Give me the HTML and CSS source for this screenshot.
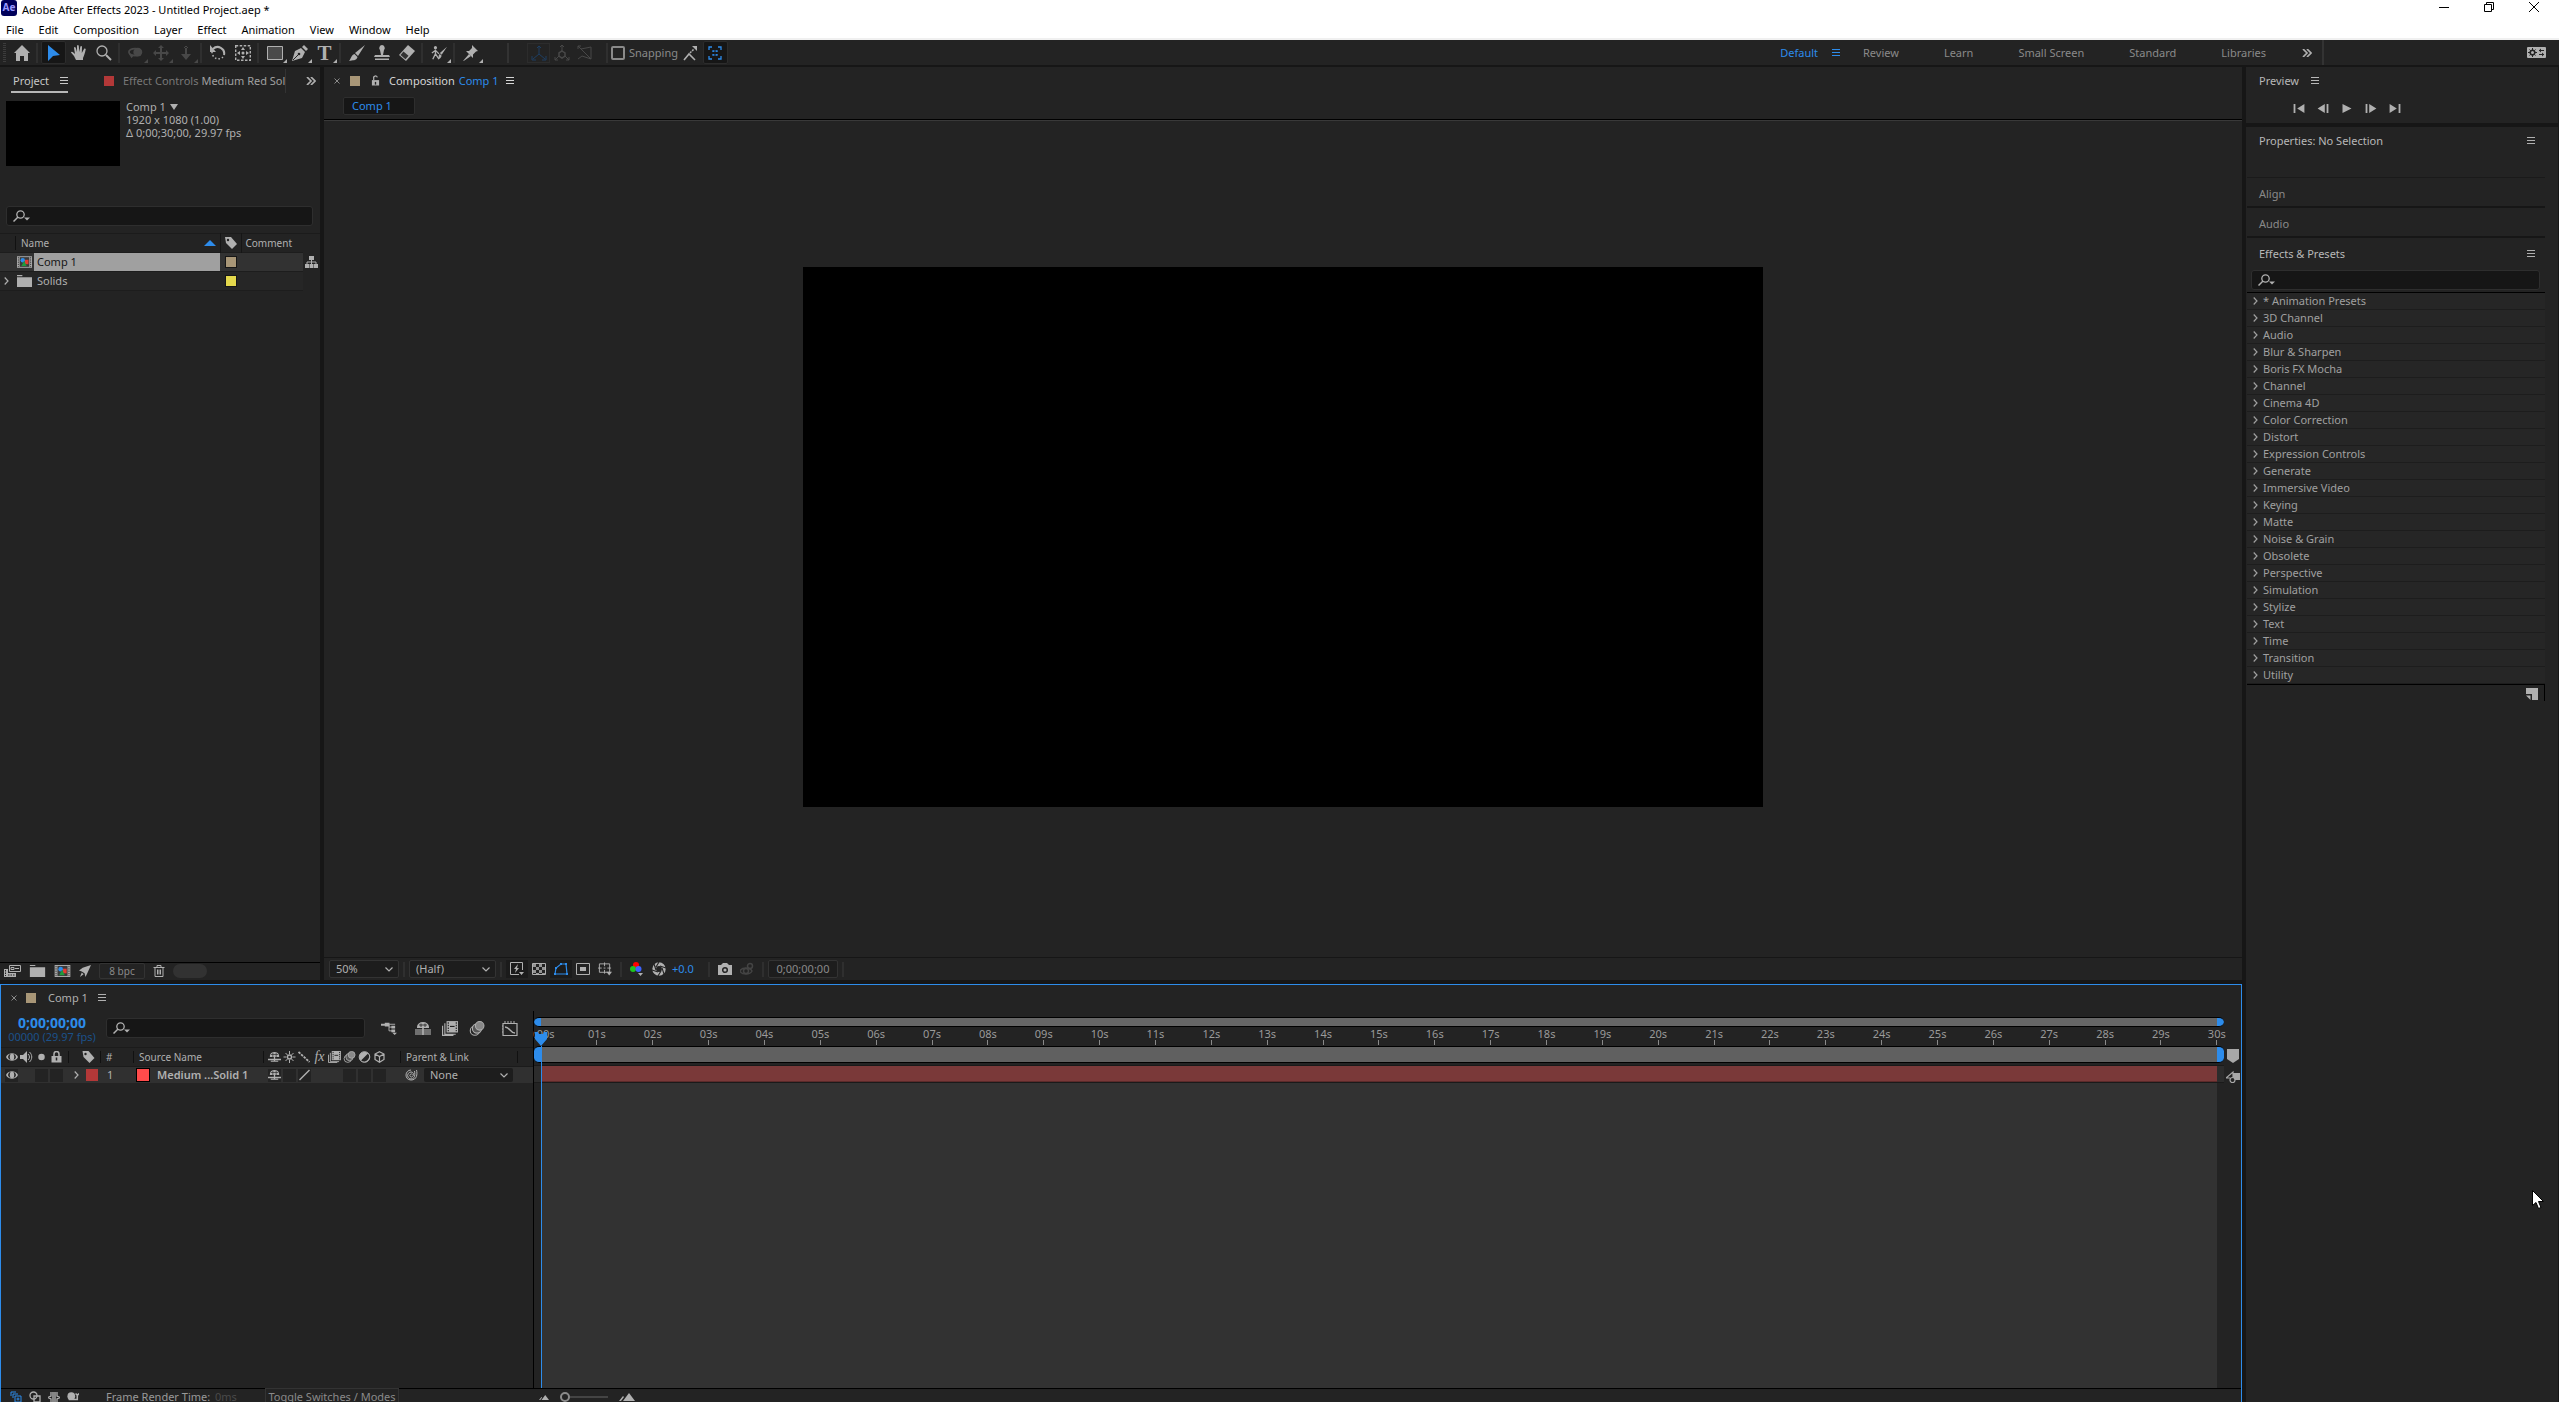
FILE: index.html
```html
<!DOCTYPE html>
<html lang="en">
<head>
    <meta charset="UTF-8">
    <meta name="viewport" content="width=device-width, initial-scale=1.0">
    <title>Adobe After Effects 2023 - Untitled Project.aep *</title>
    <link rel="stylesheet" href="styles.css">
</head>
<body>
    <!-- Icon sprite -->
    <svg class="sprite" aria-hidden="true">
        <symbol id="home" viewBox="0 0 16 16"><path d="M8 0L0 8h2v8h4v-5h4v5h4V8h2z"/></symbol>
        <symbol id="arrow" viewBox="0 0 16 16"><path d="M2 0v16l5-5 7-1z"/></symbol>
        <symbol id="hand" viewBox="0 0 16 16"><path d="M5 15L3 11 0 7.500c0-1 1.500-1 2-.3L4 9 3 3c0-1.300 1.500-1.300 1.800 0L6 7V1c0-1.300 1.700-1.300 1.800 0L8.300 7l1-5.300c.3-1.200 1.800-1 1.700.3L10.800 8l2.200-4c.7-1 2-.4 1.700.6C14 8 13 11 12 13v2z"/></symbol>
        <symbol id="loupe" viewBox="0 0 16 16"><path d="M10 10l5 5" stroke="currentColor" stroke-width="2"/><circle cx="6" cy="6" r="5" fill="none" stroke="currentColor" stroke-width="1.300"/></symbol>
        <symbol id="orbit" viewBox="0 0 18 16"><ellipse cx="8" cy="7" rx="7" ry="4" fill="none" stroke="currentColor" stroke-width="2"/><circle cx="11" cy="7" r="5"/><path d="M1 9l6 1-3 4z"/></symbol>
        <symbol id="move" viewBox="0 0 16 16"><path d="M7 3h2v4h4V5l3 3-3 3V9H9v4h2l-3 3-3-3h2V9H3v2L0 8l3-3v2h4V3H5l3-3 3 3z"/></symbol>
        <symbol id="dolly" viewBox="0 0 16 16"><path d="M7 1h2v8h4l-5 6-5-6h4zM6 3h4V2H6z"/></symbol>
        <symbol id="rotate" viewBox="0 0 16 16"><path d="M3 4a6.500 6.500 0 0 1 11 6" fill="none" stroke="currentColor" stroke-width="2"/><path d="M13 12a6.500 6.500 0 0 1-11-5" fill="none" stroke="currentColor" stroke-width="1.500" stroke-dasharray="1.500 2"/><path d="M0 0v7h6z"/></symbol>
        <symbol id="anchor" viewBox="0 0 16 16"><path d="M.7.700h14.600v14.600H.700z" fill="none" stroke="currentColor" stroke-width="1.400" stroke-dasharray="2.500 1.500"/><path d="M8 2l2 3H6zM8 14l2-3H6zM2 8l3-2v4zM14 8l-3-2v4z"/><circle cx="8" cy="8" r="1.500"/></symbol>
        <symbol id="rect" viewBox="0 0 16 16"><path d="M.5 1.500h15v13H.5z" fill="#4a4a4a" stroke="currentColor"/></symbol>
        <symbol id="pen" viewBox="0 0 16 16"><path d="M0 16l3-10 6-3 4 4-3 6zM10 2l2-2 4 4-2 2z"/><path d="M1 15l5-5" stroke="#232323"/><circle cx="7" cy="9" r="1.300" fill="#232323"/></symbol>
        <symbol id="brush" viewBox="0 0 16 16"><path d="M16 0l-7 11-3-3zM5.500 9l3 3c-1 4-5 3-8.500 4 2-2 2-6 5.500-7z"/></symbol>
        <symbol id="stamp" viewBox="0 0 16 16"><path d="M8 0a3 3 0 0 1 2 5L9 10h6l1 2H0l1-2h6L6 5a3 3 0 0 1 2-5zM1 13.500h14V15H1z"/></symbol>
        <symbol id="eraser" viewBox="0 0 16 16"><path d="M9 0l7 6-9 10-7-6z"/><path d="M1.500 10l3-3.500 5 4.300-3 3.400z" fill="#333"/></symbol>
        <symbol id="roto" viewBox="0 0 18 16"><circle cx="5" cy="2" r="1.800"/><path d="M5 4v5l-3 6M5 9l4 6M1 8l4-3 4 4" fill="none" stroke="currentColor" stroke-width="1.500"/><path d="M18 1l-6 9-2-2zM10 9l2 2c-1 3-2 3-4 4 1-3 0-5 2-6z"/></symbol>
        <symbol id="pin" viewBox="0 0 16 16"><path d="M9 0l6 6-2 .5-3 3V13L3 6h3l3-3z"/><path d="M6 9l-6 7 1-.2L8 11z"/></symbol>
        <symbol id="axes" viewBox="0 0 16 16"><path d="M8 1v8l-6 5M8 9l6 5M6 3l2-2 2 2M1 11v4h4M15 11v4h-4" fill="none" stroke="currentColor"/></symbol>
        <symbol id="axes-world" viewBox="0 0 16 16"><path d="M8 0v6M6 2l2-2 2 2M5 11l-4 4M11 11l4 4M1 12v3h3M15 12v3h-3" fill="none" stroke="currentColor"/><path d="M8 6l3 2v3l-3 2-3-2V8z" fill="none" stroke="currentColor" stroke-width="1.500"/></symbol>
        <symbol id="axes-view" viewBox="0 0 16 16"><path d="M4 4l10-2v12l-9-3M1 1l13 13M1 4V1h3M5 11l-4 3" fill="none" stroke="currentColor"/></symbol>
        <symbol id="snap" viewBox="0 0 16 16"><path d="M2 15l5-6 6 6" fill="none" stroke="currentColor" stroke-width="1.600"/><path d="M10 1h5v5z"/><path d="M8 8l4-4" stroke="currentColor" stroke-width="1.500" stroke-dasharray="2 1"/></symbol>
        <symbol id="focus" viewBox="0 0 16 16"><path d="M2 5V2h3M11 2h3v3M14 11v3h-3M5 14H2v-3M6 7V6h1.500M8.500 6H10v1M10 9v1H8.500M7.500 10H6V9" fill="none" stroke="currentColor" stroke-width="1.300"/></symbol>
        <symbol id="more" viewBox="0 0 10 8"><path d="M1 0l4 4-4 4M5 0l4 4-4 4" fill="none" stroke="currentColor" stroke-width="1.700"/></symbol>
        <symbol id="menu" viewBox="0 0 8 8"><path d="M0 .5h8M0 3.500h8M0 6.500h8" stroke="currentColor"/></symbol>
        <symbol id="sync" viewBox="0 0 19 11"><rect width="19" height="11" rx="1"/><circle cx="5.500" cy="5.500" r="2.300" fill="none" stroke="#232323" stroke-width="1.600"/><path d="M5.500 1v2M5.500 8v2M1 5.500h2M8 5.500h2M2.500 2.500l1 1M8.500 2.500l-1 1M2.500 8.500l1-1M8.500 8.500l-1-1M12 3.500h5M12 7.500h5" stroke="#232323" fill="none"/><path d="M12 3.500l2-2v4zM17 7.500l-2-2v4z" fill="#232323"/></symbol>
        <symbol id="close" viewBox="0 0 6 6"><path d="M.5.500l5 5M5.500.500l-5 5" stroke="currentColor"/></symbol>
        <symbol id="unlock" viewBox="0 0 10 12"><path d="M1 5h8v6H1z"/><path d="M3 5V3a2 2 0 0 1 4-1" fill="none" stroke="currentColor" stroke-width="1.400"/><path d="M5 7v3" stroke="#232323" stroke-width="1.500"/></symbol>
        <symbol id="lock" viewBox="0 0 10 12"><path d="M0 5h10v6.500H0z"/><path d="M2.500 5V3a2.500 2.500 0 0 1 5 0v2" fill="none" stroke="currentColor" stroke-width="1.500"/><path d="M5 6.500v3" stroke="#232323" stroke-width="1.500"/></symbol>
        <symbol id="find" viewBox="0 0 17 12"><circle cx="7.500" cy="4.500" r="3.700" fill="none" stroke="currentColor" stroke-width="1.300"/><path d="M5 7l-4.500 4.500" stroke="currentColor" stroke-width="1.500"/><path d="M11 7.500h6l-3 3z"/></symbol>
        <symbol id="up" viewBox="0 0 12 6"><path d="M6 0l6 6H0z"/></symbol>
        <symbol id="down" viewBox="0 0 8 6"><path d="M0 0h8L4 6z"/></symbol>
        <symbol id="tag" viewBox="0 0 12 12"><path d="M0 0h6l6 7-5 5-6-6z"/><circle cx="3" cy="3" r="1.200" fill="#232323"/></symbol>
        <symbol id="comp" viewBox="0 0 17 13"><path d="M0 0h17v13H0z"/><path d="M1.500 1v11M15.500 1v11" stroke="#232323" stroke-dasharray="1.500 1"/><path d="M3 1h11v11H3z" fill="#3a3a3a"/><circle cx="6.500" cy="4.500" r="2.500" fill="#2d8ceb"/><path d="M9 4h4v5H9z" fill="#e33b32"/><path d="M8 5l3 6H5z" fill="#1f9a3d"/></symbol>
        <symbol id="folder" viewBox="0 0 14 11"><path d="M0 0h5v1H0zM0 2h14v9H0z"/></symbol>
        <symbol id="chevron" viewBox="0 0 5 8"><path d="M.7.500L4 4 .7 7.500" fill="none" stroke="currentColor" stroke-width="1.200"/></symbol>
        <symbol id="caret" viewBox="0 0 8 5"><path d="M.5.500L4 4 7.500.500" fill="none" stroke="currentColor" stroke-width="1.200"/></symbol>
        <symbol id="tree" viewBox="0 0 13 12"><path d="M4 0h5v4H4zM0 8h4v4H0zM4.500 8h4v4h-4zM9 8h4v4H9z"/><path d="M6.500 4v4M2 8V6h9v2" fill="none" stroke="currentColor"/></symbol>
        <symbol id="footage" viewBox="0 0 17 12"><path d="M5.500.500h11v6h-11zM7 2.500h3v2H7zM11 3.500h4" fill="none" stroke="currentColor"/><path d="M0 4h4v4h8v4H0z"/><path d="M1.500 5v6M4 10h7" stroke="#232323" stroke-dasharray="1.500 1"/></symbol>
        <symbol id="rocket" viewBox="0 0 13 13"><path d="M13 0L9 9l-2 4-1-4-3-2L0 6l4-3zM3 8l2 2-4 3z"/></symbol>
        <symbol id="trash" viewBox="0 0 11 12"><path d="M0 2.500h11M3.500 2V.500h4V2M1.500 3v8.500h8V3M4 4.500v5M5.500 4.500v5M7 4.500v5" fill="none" stroke="currentColor"/></symbol>
        <symbol id="fast" viewBox="0 0 14 14"><path d="M9 12.500H.500v-12h12V8" fill="none" stroke="currentColor"/><path d="M8 2L4 7h2l-1 4 4-5H7zM9 10h5l-2.500 3z"/></symbol>
        <symbol id="checker" viewBox="0 0 14 12"><path d="M.5.500h13v11H.500z" fill="none" stroke="currentColor"/><path d="M1 1h3v3H1zM7 1h3v3H7zM4 4h3v3H4zM10 4h3v3h-3zM1 7h3v3H1zM7 7h3v3H7zM4 10h3v1H4zM10 10h3v1h-3z" opacity=".8"/></symbol>
        <symbol id="mask" viewBox="0 0 14 12"><path d="M1 11l1-6 5-4h5l1 10z" fill="none" stroke="currentColor" stroke-width="1.200"/><path d="M0 10h2v2H0zM1 4h2v2H1zM6 0h2v2H6zM11 0h2v2h-2zM12 10h2v2h-2z"/></symbol>
        <symbol id="roi" viewBox="0 0 14 12"><path d="M.5.500h13v11H.500z" fill="none" stroke="currentColor"/><path d="M4 4h6v4H4z"/></symbol>
        <symbol id="guides" viewBox="0 0 15 14"><path d="M1.500 1.500h11v9h-11z" fill="none" stroke="currentColor"/><path d="M7 0v4M7 8v4M0 6h4M10 6h4M6 6h2" stroke="currentColor"/><path d="M9 10h6l-3 4z"/></symbol>
        <symbol id="channels" viewBox="0 0 14 14"><circle cx="6" cy="3" r="3" fill="#f00"/><circle cx="3" cy="7" r="3" fill="#1ec41e"/><circle cx="8.500" cy="7" r="3" fill="#3d64ff"/><path d="M8 11h5l-2.500 3z"/></symbol>
        <symbol id="aperture" viewBox="0 0 14 14"><circle cx="7" cy="7" r="4.800" fill="none" stroke="currentColor" stroke-width="3.800"/><path d="M7 0L4 5M14 6L8 4M12 12l-2-6M6 14l3-5M0 8l6 2M2 2l2 6" stroke="#232323" stroke-width="1.100"/></symbol>
        <symbol id="camera" viewBox="0 0 14 12"><path d="M0 2h3l2-2h4l2 2h3v10H0z"/><circle cx="7" cy="7" r="2.300" fill="none" stroke="#232323" stroke-width="1.500"/></symbol>
        <symbol id="show" viewBox="0 0 14 12"><circle cx="6" cy="8" r="2.500" fill="none" stroke="currentColor" stroke-width="1.500"/><path d="M0 8c2-4 10-4 12 0-2 4-10 4-12 0" fill="none" stroke="currentColor" stroke-width="1.500"/><circle cx="10" cy="3" r="2.500" fill="none" stroke="currentColor" stroke-width="1.500"/></symbol>
        <symbol id="flow" viewBox="0 0 17 14"><path d="M0 2h4v2H0zM4 1h5v4H4zM11 4h4v3h-4zM11 8h4v3h-4zM12 11.500h5L14.500 14z"/><path d="M8 2.500h7M8.500 3v6.500H12M8.500 5.500H12" fill="none" stroke="currentColor"/></symbol>
        <symbol id="shy" viewBox="0 0 14 12"><path d="M2 5a5 4.500 0 0 1 10 0v1H2zM0 8h14v1.500H0zM6.300 5h1.400v5H6.300zM3 10h8v1H3z"/><path d="M5.200 1.500V6M8.800 1.500V6M3 3.300h8" stroke="#232323" stroke-width=".7"/></symbol>
        <symbol id="shy-big" viewBox="0 0 16 13"><path d="M0 7h16v6H0z" opacity=".55"/><path d="M2 5a6 5 0 0 1 12 0v1H2zM7.200 5h1.600v8H7.200z"/><path d="M6 1.500V5M10 1.500V5M4 3h8" stroke="#232323" stroke-width=".8"/></symbol>
        <symbol id="film" viewBox="0 0 14 13"><path d="M4 0h10v10H4z"/><path d="M2.500 2v9.500H12M.5 4v8.500H10" fill="none" stroke="currentColor"/><path d="M5.500 1v8M12.500 1v8" stroke="#232323" stroke-dasharray="1.300 1"/><path d="M7 4.700h4" stroke="#232323"/></symbol>
        <symbol id="blur" viewBox="0 0 14 14"><circle cx="5" cy="9" r="4.300" fill="none" stroke="currentColor"/><circle cx="7" cy="7" r="4.300" fill="#555" stroke="currentColor"/><circle cx="9.500" cy="4.500" r="4" fill="#888" stroke="currentColor"/></symbol>
        <symbol id="graph" viewBox="0 0 16 15"><path d="M1 2.500h14v12H1z" fill="none" stroke="currentColor" stroke-width="1.200"/><path d="M3 0v2M6 0v2M9 0v2M12 0v2M0 5h1M0 8h1M0 11h1" stroke="currentColor"/><path d="M3 6c5 0 5 6 10 6" fill="none" stroke="currentColor" stroke-width="1.300"/></symbol>
        <symbol id="eye" viewBox="0 0 12 8"><path d="M0 4c2-5 10-5 12 0-2 5-10 5-12 0z"/><path d="M2 4c1-3 2-3 2.500-3C3.500 3 3.500 5 4.500 7 3.500 6.500 2.500 6 2 4zM10 4C9 1 8 1 7.500 1c1 2 1 4 0 6 1-.5 2-1 2.500-3z" fill="#232323"/></symbol>
        <symbol id="speaker" viewBox="0 0 13 12"><path d="M0 4h3l4-4v12L3 8H0z"/><path d="M8 3c2 2 2 4 0 6M9.500 1c3 3 3 7 0 10" fill="none" stroke="currentColor"/></symbol>
        <symbol id="dot" viewBox="0 0 8 8"><circle cx="4" cy="4" r="3.700"/></symbol>
        <symbol id="sun" viewBox="0 0 12 12"><circle cx="6" cy="6" r="2" fill="none" stroke="currentColor" stroke-width="1.400"/><path d="M6 0v3M6 9v3M0 6h3M9 6h3M2 2l2 2M8 8l2 2M10 2L8 4M4 8l-2 2" stroke="currentColor"/></symbol>
        <symbol id="quality" viewBox="0 0 12 12"><path d="M0 1l11 10" stroke="currentColor" stroke-width="1.800" stroke-dasharray="2.500 1"/></symbol>
        <symbol id="slash" viewBox="0 0 12 12"><path d="M1 11L11 1" stroke="currentColor" stroke-width="1.400"/></symbol>
        <symbol id="adjust" viewBox="0 0 12 12"><circle cx="6" cy="6" r="5.300"/><path d="M9.500 2.500a5 5 0 0 1-7 7z" fill="#232323"/><circle cx="6" cy="6" r="5.300" fill="none" stroke="currentColor"/></symbol>
        <symbol id="cube" viewBox="0 0 12 12"><path d="M6 .7l4.500 2.300v5.500L6 11.300 1.500 8.500V3zM1.500 3L6 5.500 10.500 3M6 5.500V11" fill="none" stroke="currentColor" stroke-width="1.200"/></symbol>
        <symbol id="spiral" viewBox="0 0 13 12"><path d="M7.500 5.500a1.500 1.500 0 1 0 0 2c1.500-1 1.500-4.500-1.500-4.500a3.500 3.500 0 1 0 3 5.500c1-1.500 1-4 .5-6.500M11.500 1c1 4 .5 10-5.500 10-3.500 0-5-2.500-5-5s2-5 5-5" fill="none" stroke="currentColor"/></symbol>
        <symbol id="first" viewBox="0 0 12 10"><path d="M0 0h2v10H0zM12 0v10L4 5z"/></symbol>
        <symbol id="prev" viewBox="0 0 12 10"><path d="M10 0h2v10h-2zM8 0v10L0 5z"/></symbol>
        <symbol id="play" viewBox="0 0 10 10"><path d="M0 0l10 5-10 5z"/></symbol>
        <symbol id="next" viewBox="0 0 12 10"><path d="M0 0h2v10H0zM4 0l8 5-8 5z"/></symbol>
        <symbol id="last" viewBox="0 0 12 10"><path d="M10 0h2v10h-2zM0 0l8 5-8 5z"/></symbol>
        <symbol id="newbin" viewBox="0 0 12 12"><path d="M0 0h12v12H6V6H0z"/><path d="M0 7.500h4.500V12z"/></symbol>
        <symbol id="marker" viewBox="0 0 12 14"><path d="M0 0h12v10l-6 4-6-4z"/></symbol>
        <symbol id="button" viewBox="0 0 14 12"><path d="M7 2h7v7H7z"/><path d="M0 7l7-6v5M0 7h4" fill="none" stroke="currentColor" stroke-width="1.200"/><circle cx="6.500" cy="9" r="2.500" fill="#232323" stroke="currentColor" stroke-width="1.200"/></symbol>
        <symbol id="layers" viewBox="0 0 12 12"><path d="M1 5V1h5M3 7V3h5M5 5h6v6H5zM8 6.500v3M6.500 8h3" fill="none" stroke="currentColor"/></symbol>
        <symbol id="shapes" viewBox="0 0 12 12"><circle cx="4.500" cy="4.500" r="3.500" fill="none" stroke="currentColor" stroke-width="1.300"/><path d="M5 5h6v6H5z" fill="none" stroke="currentColor" stroke-width="1.300"/></symbol>
        <symbol id="braces" viewBox="0 0 12 12"><path d="M3 1v4L0 6.500 3 8v4M9 1v4l3 1.500L9 8v4" fill="none" stroke="currentColor" stroke-width="1.300"/><path d="M4 1h4v11H4z" opacity=".7"/></symbol>
        <symbol id="snail" viewBox="0 0 14 12"><circle cx="5" cy="5" r="4.500"/><path d="M2 9h10V3M10 2l2 2 2-2" fill="none" stroke="currentColor" stroke-width="1.800"/></symbol>
        <symbol id="hills" viewBox="0 0 16 8"><path d="M4 8l6-8 6 8zM0 8l4-5 1 1-3 4z"/></symbol>
        <symbol id="playhead" viewBox="0 0 12 14"><path d="M0 0h3l1 2h4l1-2h3v7l-6 7-6-7z"/></symbol>
    </svg>

    <header class="titlebar">
        <div class="app-title">
            <span class="app-logo">Ae</span>
            <h1>Adobe After Effects 2023 - Untitled Project.aep *</h1>
        </div>
        <div class="window-buttons">
            <button aria-label="Minimize"><svg viewBox="0 0 10 10"><path d="M0 5.500h10" stroke="#000"/></svg></button>
            <button aria-label="Restore"><svg viewBox="0 0 10 10"><path d="M.5 2.500h7v7h-7zM2.500 2.500v-2h7v7h-2" fill="none" stroke="#000"/></svg></button>
            <button aria-label="Close"><svg viewBox="0 0 10 10"><path d="M0 0l10 10M10 0L0 10" stroke="#000"/></svg></button>
        </div>
    </header>

    <nav class="menubar">
        <button>File</button>
        <button>Edit</button>
        <button>Composition</button>
        <button>Layer</button>
        <button>Effect</button>
        <button>Animation</button>
        <button>View</button>
        <button>Window</button>
        <button>Help</button>
    </nav>

    <div class="toolbar">
        <span class="grip"></span>
        <button class="tool" aria-label="Home"><svg><use href="#home"/></svg></button>
        <span class="sep"></span>
        <button class="tool active" aria-label="Selection"><svg><use href="#arrow"/></svg></button>
        <button class="tool" aria-label="Hand"><svg><use href="#hand"/></svg></button>
        <button class="tool" aria-label="Zoom"><svg><use href="#loupe"/></svg></button>
        <span class="sep"></span>
        <button class="tool more dim" aria-label="Orbit"><svg><use href="#orbit"/></svg></button>
        <button class="tool more dim" aria-label="Pan"><svg><use href="#move"/></svg></button>
        <button class="tool more dim" aria-label="Dolly"><svg><use href="#dolly"/></svg></button>
        <span class="sep"></span>
        <button class="tool" aria-label="Rotation"><svg><use href="#rotate"/></svg></button>
        <button class="tool" aria-label="Pan Behind"><svg><use href="#anchor"/></svg></button>
        <span class="sep"></span>
        <button class="tool more" aria-label="Rectangle"><svg><use href="#rect"/></svg></button>
        <button class="tool more" aria-label="Pen"><svg><use href="#pen"/></svg></button>
        <button class="tool more type">T</button>
        <span class="sep"></span>
        <button class="tool" aria-label="Brush"><svg><use href="#brush"/></svg></button>
        <button class="tool" aria-label="Clone Stamp"><svg><use href="#stamp"/></svg></button>
        <button class="tool" aria-label="Eraser"><svg><use href="#eraser"/></svg></button>
        <span class="sep"></span>
        <button class="tool more" aria-label="Roto Brush"><svg><use href="#roto"/></svg></button>
        <span class="sep"></span>
        <button class="tool more" aria-label="Puppet Pin"><svg><use href="#pin"/></svg></button>
        <div class="axis-tools">
            <button class="tool axis-on" aria-label="Local Axis"><svg><use href="#axes"/></svg></button>
            <button class="tool dim" aria-label="World Axis"><svg><use href="#axes-world"/></svg></button>
            <button class="tool dim" aria-label="View Axis"><svg><use href="#axes-view"/></svg></button>
        </div>
        <span class="sep"></span>
        <label class="snapping"><input type="checkbox"> Snapping</label>
        <button class="tool" aria-label="Snap to edges"><svg><use href="#snap"/></svg></button>
        <button class="tool active" aria-label="Snap to features"><svg><use href="#focus"/></svg></button>
        <div class="workspaces">
            <button class="current">Default <svg class="menu"><use href="#menu"/></svg></button>
            <button>Review</button>
            <button>Learn</button>
            <button>Small Screen</button>
            <button>Standard</button>
            <button class="last">Libraries</button>
            <button class="overflow" aria-label="More workspaces"><svg><use href="#more"/></svg></button>
        </div>
        <div class="sync">
            <button aria-label="Sync settings"><svg><use href="#sync"/></svg></button>
        </div>
    </div>

    <main class="workspace">
        <section class="panel project">
            <div class="tabs">
                <button class="tab selected">Project <svg class="menu"><use href="#menu"/></svg></button>
                <span class="swatch red"></span>
                <button class="tab effect-tab">Effect Controls <b>Medium Red Sol</b></button>
                <button class="overflow" aria-label="More panels"><svg><use href="#more"/></svg></button>
            </div>
            <div class="item-info">
                <div class="thumb"></div>
                <div>
                    <p>Comp 1 <svg class="down"><use href="#down"/></svg></p>
                    <p>1920 x 1080 (1.00)</p>
                    <p>Δ 0;00;30;00, 29.97 fps</p>
                </div>
            </div>
            <label class="search project-search"><svg><use href="#find"/></svg><input type="text" aria-label="Search project"></label>
            <table class="items">
                <thead>
                    <tr>
                        <th class="col-twist"></th>
                        <th class="col-name"><div>Name <svg class="sort"><use href="#up"/></svg></div></th>
                        <th class="col-tag"><svg class="tag"><use href="#tag"/></svg></th>
                        <th class="col-comment">Comment</th>
                        <th class="col-flow"></th>
                    </tr>
                </thead>
                <tbody>
                    <tr class="selected">
                        <td></td>
                        <td><div class="item"><svg><use href="#comp"/></svg><span>Comp 1</span></div></td>
                        <td><span class="swatch tan"></span></td>
                        <td></td>
                        <td class="flow-cell"><svg class="tree"><use href="#tree"/></svg></td>
                    </tr>
                    <tr>
                        <td><svg class="chevron"><use href="#chevron"/></svg></td>
                        <td><div class="item"><svg><use href="#folder"/></svg><span>Solids</span></div></td>
                        <td><span class="swatch yellow"></span></td>
                        <td></td>
                        <td class="flow-cell"></td>
                    </tr>
                </tbody>
            </table>
            <div class="project-footer">
                <button aria-label="Interpret Footage"><svg><use href="#footage"/></svg></button>
                <button aria-label="New Folder"><svg><use href="#folder"/></svg></button>
                <button aria-label="New Composition"><svg><use href="#comp"/></svg></button>
                <button aria-label="Project Settings"><svg><use href="#rocket"/></svg></button>
                <button class="depth">8 bpc</button>
                <button aria-label="Delete"><svg><use href="#trash"/></svg></button>
                <span class="scroll"></span>
            </div>
        </section>

        <section class="panel viewer">
            <div class="tabs">
                <button class="close" aria-label="Close"><svg><use href="#close"/></svg></button>
                <span class="swatch tan"></span>
                <button class="lock" aria-label="Lock"><svg><use href="#unlock"/></svg></button>
                <button class="tab bright">Composition <em>Comp 1</em> <svg class="menu"><use href="#menu"/></svg></button>
            </div>
            <div class="crumbs"><button>Comp 1</button></div>
            <div class="stage"><div class="frame"></div></div>
            <div class="viewer-footer">
                <label class="select zoom-level"><select aria-label="Magnification"><option>50%</option></select><svg><use href="#caret"/></svg></label>
                <span class="sep"></span>
                <label class="select resolution"><select aria-label="Resolution"><option>(Half)</option></select><svg><use href="#caret"/></svg></label>
                <span class="sep"></span>
                <button class="dark" aria-label="Fast Previews"><svg><use href="#fast"/></svg></button>
                <button aria-label="Transparency Grid"><svg><use href="#checker"/></svg></button>
                <button class="dark blue" aria-label="Mask Visibility"><svg><use href="#mask"/></svg></button>
                <button aria-label="Region of Interest"><svg><use href="#roi"/></svg></button>
                <button aria-label="Guides"><svg><use href="#guides"/></svg></button>
                <span class="sep"></span>
                <button aria-label="Channels"><svg><use href="#channels"/></svg></button>
                <button aria-label="Reset Exposure"><svg><use href="#aperture"/></svg></button>
                <button class="exposure">+0.0</button>
                <span class="sep"></span>
                <button aria-label="Snapshot"><svg><use href="#camera"/></svg></button>
                <button class="dim" aria-label="Show Snapshot"><svg><use href="#show"/></svg></button>
                <span class="sep"></span>
                <button class="timecode">0;00;00;00</button>
                <span class="sep"></span>
            </div>
        </section>

        <section class="panel timeline">
            <div class="tabs">
                <button class="close" aria-label="Close"><svg><use href="#close"/></svg></button>
                <span class="swatch tan"></span>
                <button class="tab">Comp 1 <svg class="menu"><use href="#menu"/></svg></button>
            </div>
            <div class="timeline-body">
                <div class="layers">
                    <div class="layer-tools">
                        <button class="now"><strong>0;00;00;00</strong><span>00000 (29.97 fps)</span></button>
                        <label class="search"><svg><use href="#find"/></svg><input type="text" aria-label="Search layers"></label>
                        <div class="layer-toggles">
                            <button aria-label="Mini-Flowchart"><svg><use href="#flow"/></svg></button>
                            <button aria-label="Hide Shy Layers"><svg><use href="#shy-big"/></svg></button>
                            <button aria-label="Frame Blending"><svg><use href="#film"/></svg></button>
                            <button aria-label="Motion Blur"><svg><use href="#blur"/></svg></button>
                            <button class="graph" aria-label="Graph Editor"><svg><use href="#graph"/></svg></button>
                        </div>
                    </div>
                    <table class="layer-table">
                        <thead>
                            <tr>
                                <th class="col-av"><div class="cells"><i><svg class="eye"><use href="#eye"/></svg></i><i><svg><use href="#speaker"/></svg></i><i><svg class="dot"><use href="#dot"/></svg></i><i><svg><use href="#lock"/></svg></i></div></th>
                                <th class="col-label"><svg><use href="#tag"/></svg></th>
                                <th class="col-num">#</th>
                                <th class="col-source">Source Name</th>
                                <th class="col-switches"><div class="cells"><i><svg><use href="#shy"/></svg></i><i><svg><use href="#sun"/></svg></i><i><svg><use href="#quality"/></svg></i><i class="fx">fx</i><i><svg><use href="#film"/></svg></i><i><svg><use href="#blur"/></svg></i><i><svg><use href="#adjust"/></svg></i><i><svg><use href="#cube"/></svg></i></div></th>
                                <th class="col-parent">Parent &amp; Link</th>
                                <th></th>
                            </tr>
                        </thead>
                        <tbody>
                            <tr>
                                <td><div class="cells"><i class="well"><svg class="eye"><use href="#eye"/></svg></i><i></i><i class="well"></i><i class="well"></i></div></td>
                                <td><div class="label-cell"><svg class="chevron"><use href="#chevron"/></svg><span class="swatch red"></span></div></td>
                                <td class="num">1</td>
                                <td><div class="source"><span class="solid"></span><b>Medium ...Solid 1</b></div></td>
                                <td><div class="cells"><i class="well"><svg><use href="#shy"/></svg></i><i class="well"></i><i class="well"><svg><use href="#slash"/></svg></i><i></i><i></i><i class="well"></i><i class="well"></i><i class="well"></i></div></td>
                                <td colspan="2"><div class="parent"><svg><use href="#spiral"/></svg><label class="select"><select aria-label="Parent"><option>None</option></select><svg><use href="#caret"/></svg></label></div></td>
                            </tr>
                        </tbody>
                    </table>
                </div>

                <div class="time">
                    <div class="navigator"><span></span></div>
                    <div class="ruler">
                        <span>0:00s</span><span>01s</span><span>02s</span><span>03s</span><span>04s</span><span>05s</span><span>06s</span><span>07s</span><span>08s</span><span>09s</span><span>10s</span><span>11s</span><span>12s</span><span>13s</span><span>14s</span><span>15s</span><span>16s</span><span>17s</span><span>18s</span><span>19s</span><span>20s</span><span>21s</span><span>22s</span><span>23s</span><span>24s</span><span>25s</span><span>26s</span><span>27s</span><span>28s</span><span>29s</span><span>30s</span>
                    </div>
                    <div class="work-area"><span></span></div>
                    <div class="track"><span class="clip"></span></div>
                    <div class="tracks"></div>
                    <div class="playhead"><svg><use href="#playhead"/></svg></div>
                </div>

                <div class="gutter">
                    <button aria-label="Comp Marker Bin"><svg><use href="#marker"/></svg></button>
                    <button aria-label="Comp Button"><svg><use href="#button"/></svg></button>
                </div>
            </div>
            <div class="timeline-footer">
                <button class="blue" aria-label="Layer Switches"><svg><use href="#layers"/></svg></button>
                <button aria-label="Transfer Controls"><svg><use href="#shapes"/></svg></button>
                <button aria-label="In and Out"><svg><use href="#braces"/></svg></button>
                <button aria-label="Render Time"><svg><use href="#snail"/></svg></button>
                <span class="render">Frame Render Time: <i>0ms</i></span>
                <button class="toggle">Toggle Switches / Modes</button>
                <div class="time-zoom">
                    <svg class="small-hills"><use href="#hills"/></svg>
                    <input type="range" min="0" max="100" value="0" aria-label="Time zoom">
                    <svg><use href="#hills"/></svg>
                </div>
            </div>
        </section>

        <aside class="side">
            <section class="panel preview">
                <div class="tabs">
                    <button class="tab">Preview <svg class="menu"><use href="#menu"/></svg></button>
                </div>
                <div class="transport">
                    <button aria-label="First Frame"><svg><use href="#first"/></svg></button>
                    <button aria-label="Previous Frame"><svg><use href="#prev"/></svg></button>
                    <button aria-label="Play"><svg><use href="#play"/></svg></button>
                    <button aria-label="Next Frame"><svg><use href="#next"/></svg></button>
                    <button aria-label="Last Frame"><svg><use href="#last"/></svg></button>
                </div>
            </section>
            <section class="panel stack">
                <div class="stack-head properties"><h2>Properties: No Selection</h2><button aria-label="Menu"><svg class="menu"><use href="#menu"/></svg></button></div>
                <div class="stack-head folded"><h2>Align</h2></div>
                <div class="stack-head folded"><h2>Audio</h2></div>
                <div class="stack-head"><h2>Effects &amp; Presets</h2><button aria-label="Menu"><svg class="menu"><use href="#menu"/></svg></button></div>
                <label class="search"><svg><use href="#find"/></svg><input type="text" aria-label="Search effects"></label>
                <ul class="effects">
                    <li><button><svg class="chevron"><use href="#chevron"/></svg>* Animation Presets</button></li>
                    <li><button><svg class="chevron"><use href="#chevron"/></svg>3D Channel</button></li>
                    <li><button><svg class="chevron"><use href="#chevron"/></svg>Audio</button></li>
                    <li><button><svg class="chevron"><use href="#chevron"/></svg>Blur &amp; Sharpen</button></li>
                    <li><button><svg class="chevron"><use href="#chevron"/></svg>Boris FX Mocha</button></li>
                    <li><button><svg class="chevron"><use href="#chevron"/></svg>Channel</button></li>
                    <li><button><svg class="chevron"><use href="#chevron"/></svg>Cinema 4D</button></li>
                    <li><button><svg class="chevron"><use href="#chevron"/></svg>Color Correction</button></li>
                    <li><button><svg class="chevron"><use href="#chevron"/></svg>Distort</button></li>
                    <li><button><svg class="chevron"><use href="#chevron"/></svg>Expression Controls</button></li>
                    <li><button><svg class="chevron"><use href="#chevron"/></svg>Generate</button></li>
                    <li><button><svg class="chevron"><use href="#chevron"/></svg>Immersive Video</button></li>
                    <li><button><svg class="chevron"><use href="#chevron"/></svg>Keying</button></li>
                    <li><button><svg class="chevron"><use href="#chevron"/></svg>Matte</button></li>
                    <li><button><svg class="chevron"><use href="#chevron"/></svg>Noise &amp; Grain</button></li>
                    <li><button><svg class="chevron"><use href="#chevron"/></svg>Obsolete</button></li>
                    <li><button><svg class="chevron"><use href="#chevron"/></svg>Perspective</button></li>
                    <li><button><svg class="chevron"><use href="#chevron"/></svg>Simulation</button></li>
                    <li><button><svg class="chevron"><use href="#chevron"/></svg>Stylize</button></li>
                    <li><button><svg class="chevron"><use href="#chevron"/></svg>Text</button></li>
                    <li><button><svg class="chevron"><use href="#chevron"/></svg>Time</button></li>
                    <li><button><svg class="chevron"><use href="#chevron"/></svg>Transition</button></li>
                    <li><button><svg class="chevron"><use href="#chevron"/></svg>Utility</button></li>
                </ul>
                <div class="effects-footer"><button aria-label="New Preset"><svg><use href="#newbin"/></svg></button></div>
            </section>
        </aside>
    </main>

    <svg class="cursor" viewBox="0 0 12 19"><path d="M.5.500v15l3.500-3 2.500 6 2.500-1-2.500-6h5z" fill="#fff" stroke="#000"/></svg>
</body>
</html>
```

FILE: styles.css
```css
:root {
    --panel: #232323;
    --gap: #161616;
    --field: #161616;
    --line: #333333;
    --text: #b0b0b0;
    --muted: #8a8a8a;
    --blue: #2d8ceb;
}

* {
    box-sizing: border-box;
}

body {
    margin: 0;
    height: 100vh;
    display: flex;
    flex-direction: column;
    overflow: hidden;
    background: var(--gap);
    color: var(--text);
    font: 11px/16px "Noto Sans", "Open Sans", sans-serif;
}

button,
input,
select {
    margin: 0;
    padding: 0;
    border: 0;
    background: none;
    color: inherit;
    font: inherit;
}

button {
    display: flex;
    align-items: center;
    justify-content: center;
    white-space: nowrap;
}

svg {
    display: block;
    flex: none;
    fill: currentColor;
    width: 14px;
    height: 14px;
}

h1, h2, p, ul {
    margin: 0;
    padding: 0;
    font-size: inherit;
    font-weight: normal;
    list-style: none;
}

em, i {
    font-style: normal;
}

.sprite {
    position: absolute;
    width: 0;
    height: 0;
}

/* Window chrome */
.titlebar {
    display: flex;
    justify-content: space-between;
    height: 19px;
    background: #fff;
    color: #000;
}

.app-title {
    display: flex;
    align-items: center;
    gap: 5px;
    padding-left: 1px;
}

.app-logo {
    width: 16px;
    height: 16px;
    border-radius: 3px;
    background: #00005b;
    color: #9999ff;
    font-weight: bold;
    font-size: 10px;
    line-height: 15px;
    text-align: center;
    margin-bottom: 3px;
}

.window-buttons {
    display: flex;
}

.window-buttons button {
    width: 45px;
    height: 14px;
}

.window-buttons svg {
    width: 10px;
    height: 10px;
}

.window-buttons button:last-child {
    margin-right: 3px;
}

.menubar {
    display: flex;
    gap: 15px;
    height: 21px;
    padding: 2px 6px 0;
    background: #fff;
    border-bottom: 2px solid #f0f0f0;
    color: #000;
}

/* Tools */
.toolbar {
    display: flex;
    align-items: center;
    height: 25px;
    background: var(--panel);
}

.grip {
    width: 3px;
    height: 19px;
    margin: 0 3px;
    background: repeating-linear-gradient(#3c3c3c 0 1px, transparent 1px 2px);
}

.sep {
    width: 2px;
    height: 20px;
    margin: 0 3px 0 2px;
    background: #2f2f2f;
    flex: none;
}

.tool {
    position: relative;
    width: 25px;
    height: 23px;
    flex: none;
}

.tool svg {
    width: 16px;
    height: 16px;
}

.tool.active {
    border: 1px solid #2c2c2c;
    border-radius: 2px;
    background: var(--field);
    color: var(--blue);
}

.tool.dim {
    color: #484848;
}

.tool.more::after {
    content: "";
    position: absolute;
    right: 0;
    bottom: 1px;
    border: 2px solid transparent;
    border-right-color: currentColor;
    border-bottom-color: currentColor;
}

.tool.type {
    font: bold 21px/20px "Liberation Serif", serif;
}

.axis-tools {
    display: flex;
    align-items: center;
    margin-left: 24px;
    padding: 0 8px 0 18px;
    border-left: 2px solid #333;
}

.axis-tools .tool {
    width: 23px;
    height: 20px;
}

.axis-tools .axis-on {
    border: 1px solid #2c2c2c;
    color: #1e3f63;
}

.snapping {
    display: flex;
    align-items: center;
    gap: 4px;
    color: var(--muted);
}

.snapping input {
    appearance: none;
    width: 14px;
    height: 14px;
    border: 2px solid #8a8a8a;
    border-radius: 2px;
}

.workspaces {
    display: flex;
    align-items: center;
    height: 100%;
    margin-left: auto;
    color: var(--muted);
    border-right: 2px solid #333;
    padding-right: 10px;
}

.workspaces button {
    margin-right: 45px;
}

.workspaces .current {
    gap: 14px;
    margin-right: 23px;
    color: var(--blue);
}

.workspaces .last {
    margin-right: 36px;
}

.workspaces .overflow {
    margin: 0;
}

.menu {
    width: 8px;
    height: 8px;
}

.overflow svg {
    width: 10px;
    height: 8px;
    color: var(--text);
}

.sync {
    display: flex;
    justify-content: flex-end;
    width: 235px;
    padding-right: 13px;
}

.sync svg {
    width: 19px;
    height: 11px;
}

/* Panel grid */
.workspace {
    flex: 1;
    min-height: 0;
    display: grid;
    grid-template-columns: 320px minmax(0, 1fr) 312px;
    grid-template-rows: minmax(0, 1fr) 418px;
    gap: 4px;
    padding: 2px 1px 0 0;
}

.panel {
    display: flex;
    flex-direction: column;
    background: var(--panel);
    min-width: 0;
}

.tabs {
    display: flex;
    align-items: center;
    height: 28px;
    flex: none;
}

.tab {
    gap: 12px;
    height: 24px;
}

.tab b {
    font-weight: normal;
    color: #a0a0a0;
}

.tab.bright {
    gap: 4px;
    color: #d6d6d6;
}

.bright em {
    color: var(--blue);
    margin-right: 3px;
}

.swatch {
    display: block;
    width: 10px;
    height: 10px;
    flex: none;
}

.swatch.red {
    background: #b33838;
}

.swatch.tan {
    background: #a89677;
}

.swatch.yellow {
    background: #e4d84c;
}

.close svg {
    width: 6px;
    height: 6px;
    color: var(--muted);
}

.search {
    display: flex;
    align-items: center;
    height: 20px;
    padding-left: 6px;
    border: 1px solid #2e2e2e;
    border-radius: 3px;
    background: var(--field);
}

.search svg {
    width: 17px;
    height: 12px;
}

.search input {
    flex: 1;
    min-width: 0;
    outline: none;
}

.chevron {
    width: 5px;
    height: 8px;
}

/* Project */
.project .tabs {
    padding-left: 11px;
}

.project .selected.tab {
    padding: 0 0 0 2px;
    gap: 11px;
    border-bottom: 2px solid #b8b8b8;
    border-top: 2px solid transparent;
    color: #c8c8c8;
}

.project .tabs .swatch {
    margin: 0 9px 0 36px;
}

.effect-tab {
    flex: 1;
    justify-content: flex-start;
    gap: 3px;
    margin-right: 20px;
    border-right: 1px solid #333;
    color: #787878;
}

.project .overflow {
    margin-right: 4px;
}

.item-info {
    display: flex;
    gap: 6px;
    padding: 5px 6px 6px;
}

.item-info p {
    display: flex;
    align-items: center;
    gap: 4px;
    line-height: 13px;
}

.down {
    width: 8px;
    height: 6px;
}

.thumb {
    width: 114px;
    height: 65px;
    margin-top: 1px;
    background: #000;
}

.project-search {
    margin: 34px 7px 7px 6px;
}

.items {
    width: 100%;
    table-layout: fixed;
    border-collapse: collapse;
    border-top: 1px solid #1b1b1b;
}

.items th {
    height: 19px;
    padding: 0;
    font-size: 10px;
    font-weight: normal;
    text-align: left;
    line-height: 14px;
}

.items td {
    height: 19px;
    padding: 0;
    border-top: 1px solid #1d1d1d;
    border-bottom: 1px solid #1d1d1d;
    background: #262626;
}

.items .selected td {
    background: #323232;
}

.items td.flow-cell {
    background: none;
    border: 0;
}

.items .chevron {
    margin-left: 4px;
}

.items .swatch {
    margin-left: 6px;
    outline: 1px solid #161616;
}

.col-twist { width: 15px; }
.col-name { width: 205px; }
.col-tag { width: 21px; }
.col-flow { width: 17px; }

.col-name div {
    display: flex;
    align-items: center;
    justify-content: space-between;
    padding: 0 4px 0 5px;
    border-left: 1px solid #111;
}

.items .tag {
    width: 12px;
    height: 12px;
    margin-left: 4px;
}

.items .col-comment,
.items .col-tag {
    border-left: 1px solid #161616;
}

.items .col-comment {
    padding-left: 4px;
}

.items .sort {
    width: 12px;
    height: 6px;
    color: var(--blue);
}

.item {
    display: flex;
    align-items: center;
    height: 18px;
}

.item svg {
    width: 15px;
    height: 12px;
    margin: 0 2px 0 2px;
}

.item span {
    flex: 1;
    padding-left: 3px;
    line-height: 18px;
}

.selected .item span {
    background: #a0a0a0;
    color: #161616;
}

.tree {
    width: 13px;
    height: 12px;
    margin-left: 2px;
}

.project-footer {
    display: flex;
    align-items: center;
    gap: 8px;
    height: 18px;
    margin-top: auto;
    padding: 0 0 1px 4px;
    border-top: 1px solid #000;
}

.project-footer svg {
    width: 17px;
    height: 12px;
}

.project-footer button:nth-child(4) svg,
.project-footer button:nth-child(6) svg {
    width: 12px;
}

.depth {
    width: 46px;
    height: 16px;
    border: 1px solid var(--line);
    border-radius: 2px;
    color: var(--muted);
    font-size: 10px;
}

.scroll {
    width: 34px;
    height: 14px;
    border-radius: 7px;
    background: #323232;
}

/* Composition viewer */
.viewer .tabs {
    padding-left: 10px;
}

.viewer .swatch {
    margin: 0 11px 0 10px;
}

.lock svg {
    width: 9px;
    height: 12px;
}

.viewer .lock {
    margin-right: 9px;
}

.crumbs {
    display: flex;
    height: 25px;
    padding: 2px 0 0 19px;
    border-bottom: 1px solid #000;
}

.crumbs button {
    width: 72px;
    height: 18px;
    padding-left: 8px;
    justify-content: flex-start;
    border: 1px solid #2e2e2e;
    border-radius: 2px;
    background: var(--field);
    color: var(--blue);
}

.stage {
    flex: 1;
    min-height: 0;
    display: flex;
    align-items: center;
    justify-content: center;
    border-top: 1px solid #393939;
    border-bottom: 1px solid #161616;
    padding-bottom: 4px;
}

.frame {
    width: 51%;
    max-width: 960px;
    aspect-ratio: 16 / 9;
    background: #000;
}

.viewer-footer {
    display: flex;
    align-items: center;
    height: 22px;
    padding-left: 5px;
}

.viewer-footer .sep {
    height: 15px;
    margin: 0 4px;
}

.viewer-footer button {
    width: 22px;
    height: 18px;
}

.viewer-footer .dark {
    background: #1b1b1b;
}

.viewer-footer .dim {
    color: #444;
}

.blue {
    color: var(--blue);
}

.viewer-footer .exposure {
    width: 34px;
    justify-content: flex-start;
    padding-left: 2px;
    color: var(--blue);
}

.viewer-footer .timecode {
    width: 70px;
    border: 1px solid var(--line);
    border-radius: 2px;
    background: #1d1d1d;
    color: var(--muted);
}

.select {
    display: flex;
    align-items: center;
    height: 18px;
    padding: 0 5px 0 6px;
    border: 1px solid var(--line);
    border-radius: 2px;
    background: #1d1d1d;
}

.select select {
    flex: 1;
    min-width: 0;
    appearance: none;
    outline: none;
}

.select svg {
    width: 8px;
    height: 5px;
}

.zoom-level {
    width: 70px;
}

.resolution {
    width: 87px;
}

/* Timeline */
.timeline {
    grid-column: 1 / 3;
    border: 1px solid var(--blue);
    border-bottom: 0;
}

.timeline .tabs {
    padding-left: 10px;
    height: 26px;
}

.timeline .tab {
    gap: 10px;
}

.timeline .tabs .swatch {
    margin: 0 12px 0 9px;
}

.timeline-body {
    flex: 1;
    min-height: 0;
    display: grid;
    grid-template-columns: 532px minmax(0, 1fr) 17px;
    border-bottom: 1px solid #000;
}

.layer-tools {
    display: flex;
    height: 36px;
    padding: 7px 0 0 10px;
}

.now {
    flex-direction: column;
    width: 82px;
    height: 24px;
    margin-right: 13px;
    color: #1b518a;
    line-height: 14px;
}

.now strong {
    color: var(--blue);
    font-size: 14px;
}

.layer-tools .search {
    width: 259px;
}

.layer-toggles {
    display: flex;
    align-items: center;
    gap: 11px;
    height: 20px;
    margin-left: 16px;
}

.layer-toggles svg {
    width: 16px;
    height: 15px;
}

.layer-toggles button:first-child {
    margin-right: 7px;
}

.layer-toggles .graph {
    margin-left: 6px;
}

.layer-table {
    width: 100%;
    table-layout: fixed;
    border-collapse: collapse;
}

.layer-table th {
    height: 19px;
    padding: 0;
    border-top: 1px solid #1b1b1b;
    border-bottom: 1px solid #1b1b1b;
    font-size: 10px;
    line-height: 14px;
    font-weight: normal;
    text-align: left;
    background: linear-gradient(#111, #111) left center / 1px 12px no-repeat;
}

.layer-table th.col-av {
    background: none;
}

.layer-table td {
    height: 16px;
    padding: 0;
    background: #303030;
    line-height: 16px;
}

.layer-table svg {
    width: 13px;
    height: 12px;
}

.layer-table .eye {
    width: 12px;
    height: 8px;
}

.layer-table .dot,
.layer-table .chevron {
    width: 7px;
    height: 8px;
}

.col-av { width: 67px; }
.col-label { width: 32px; }
.col-num { width: 33px; }
.col-source { width: 130px; }
.col-switches { width: 137px; }
.col-parent { width: 117px; }

.layer-table .col-label {
    padding-left: 14px;
}

.layer-table .col-num,
.layer-table .col-source,
.layer-table .col-parent {
    padding-left: 6px;
}

.cells {
    display: flex;
    gap: 2px;
    padding-left: 4px;
}

.cells i {
    display: flex;
    align-items: center;
    justify-content: center;
    width: 13px;
    height: 13px;
}

.cells .well {
    background: var(--panel);
}

.col-switches .cells,
td:nth-child(5) .cells {
    padding-left: 5px;
}

.cells .fx {
    font: italic 14px/12px "Liberation Serif", serif;
}

.label-cell {
    display: flex;
    align-items: center;
    gap: 6px;
    padding-left: 5px;
}

.label-cell .swatch {
    width: 12px;
    height: 12px;
}

.layer-table .num {
    padding-left: 7px;
}

.source {
    display: flex;
    align-items: center;
    gap: 7px;
    padding-left: 3px;
    white-space: nowrap;
}

.source b {
    font-weight: 600;
}

.solid {
    width: 14px;
    height: 14px;
    border: 1px solid #000;
    background: #ff4b4b;
}

.parent {
    display: flex;
    align-items: center;
    gap: 6px;
    padding-left: 5px;
}

.parent .select {
    width: 89px;
    height: 14px;
    border: 0;
}

.parent .select svg {
    width: 8px;
    height: 5px;
}

/* Labels may run past the right end of the ruler, never past the left */
.time {
    position: relative;
    display: flex;
    flex-direction: column;
    min-width: 0;
    padding-top: 6px;
    border-left: 1px solid #000;
    clip-path: inset(0 -10px 0 0);
}

.navigator,
.work-area {
    border: solid #000;
    border-width: 1px 0;
    background: var(--blue);
    border-radius: 5px;
    padding: 0 7px;
    overflow: hidden;
}

.navigator {
    height: 10px;
}

.work-area {
    height: 17px;
}

.navigator span,
.work-area span {
    display: block;
    height: 100%;
    background: #666;
}

.work-area span {
    background: #606060;
}

.ruler {
    display: flex;
    justify-content: space-between;
    height: 19px;
    padding: 0 7px;
    color: #9a9a9a;
}

.ruler span {
    display: flex;
    flex-direction: column;
    align-items: center;
    width: 0;
    line-height: 13px;
}

.ruler span::after {
    content: "";
    width: 1px;
    height: 5px;
    background: #8a8a8a;
}

.track {
    height: 18px;
    margin-top: 2px;
    padding: 0 7px;
    border: solid #1a1a1a;
    border-width: 1px 0;
    background: #2c2c2c;
}

.clip {
    display: block;
    height: 100%;
    background: #7a3939;
    border-bottom: 1px solid #5c2a2a;
}

.tracks {
    flex: 1;
    margin: 0 7px;
    background: #323232;
}

/* Current time indicator lies over the ruler and tracks */
.playhead {
    position: absolute;
    top: 21px;
    bottom: 0;
    left: 1px;
    display: flex;
    flex-direction: column;
    align-items: center;
    color: var(--blue);
}

.playhead svg {
    width: 12px;
    height: 14px;
}

.playhead::after {
    content: "";
    flex: 1;
    width: 1px;
    background: var(--blue);
}

.gutter {
    display: flex;
    flex-direction: column;
    align-items: center;
    gap: 7px;
    padding-top: 38px;
    color: #a8a8a8;
}

.gutter svg {
    width: 14px;
    height: 14px;
}

.timeline-footer {
    display: flex;
    align-items: center;
    height: 13px;
    padding: 3px 0 0 5px;
    flex: none;
}

.timeline-footer button {
    width: 19px;
    height: 18px;
    flex: none;
}

.timeline-footer svg {
    width: 12px;
    height: 12px;
}

.render {
    width: 159px;
    margin-left: 24px;
    color: #999;
    white-space: nowrap;
}

.render i {
    color: #4a4a4a;
    margin-left: 2px;
}

.timeline-footer .toggle {
    width: 134px;
    border: 1px solid var(--line);
    color: var(--muted);
}

.time-zoom {
    display: flex;
    align-items: center;
    gap: 11px;
    margin-left: 140px;
}

.time-zoom input {
    appearance: none;
    width: 48px;
    height: 2px;
    background: #444;
}

.time-zoom input::-webkit-slider-thumb {
    appearance: none;
    width: 10px;
    height: 10px;
    border: 2px solid #8a8a8a;
    border-radius: 50%;
    background: var(--panel);
}

.time-zoom svg {
    width: 16px;
    height: 8px;
}

.time-zoom .small-hills {
    width: 10px;
    height: 5px;
}

/* Right column */
.side {
    grid-column: 3;
    grid-row: 1 / 3;
    display: flex;
    flex-direction: column;
    gap: 4px;
}

.preview {
    height: 56px;
}

.preview .tabs {
    padding-left: 13px;
}

.preview .tab,
.stack h2 {
    color: #b8b8b8;
}

.transport {
    display: flex;
    align-items: center;
    gap: 12px;
    padding: 9px 0 0 47px;
}

.transport svg {
    width: 12px;
    height: 9px;
}

.stack {
    flex: 1;
    padding: 0 13px 0 1px;
}

.stack-head {
    display: flex;
    justify-content: space-between;
    height: 32px;
    padding: 8px 10px 0 12px;
    flex: none;
}

.stack-head button {
    height: 16px;
}

.stack-head.properties {
    height: 51px;
    padding-top: 6px;
    border-bottom: 1px solid #1a1a1a;
}

.stack-head.folded {
    height: 30px;
    border-bottom: 2px solid var(--gap);
}

.stack .folded h2 {
    color: var(--muted);
}

.stack .search {
    margin: 0 5px 2px 4px;
    flex: none;
}

.effects {
    border: solid #000;
    border-width: 1px 0;
}

.effects li {
    height: 17px;
    border-bottom: 1px solid #1d1d1d;
    background: #262626;
}

.effects button {
    gap: 5px;
    padding-left: 6px;
    color: #a0a0a0;
}

.effects-footer {
    display: flex;
    justify-content: flex-end;
    height: 16px;
    padding: 2px 6px 0 0;
    border-right: 1px solid #000;
}

.effects-footer svg {
    width: 12px;
    height: 12px;
}

.cursor {
    position: absolute;
    left: 2532px;
    top: 1190px;
    width: 12px;
    height: 19px;
}
```
